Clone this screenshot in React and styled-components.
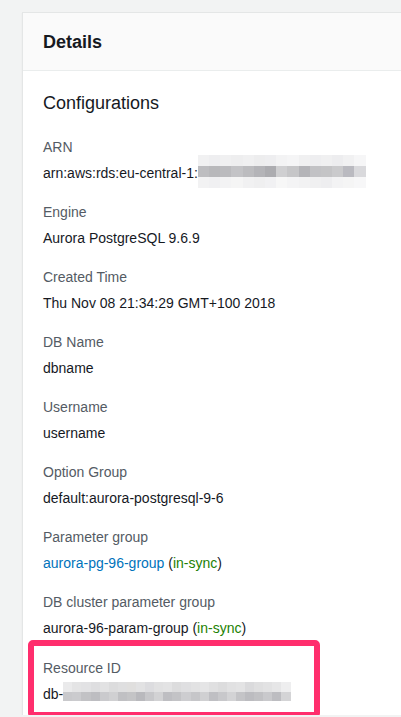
import styled, { createGlobalStyle } from "styled-components";

const GlobalStyle = createGlobalStyle`
  html, body {
    margin: 0;
    padding: 0;
    background: #f2f3f3;
    overflow: hidden;
  }

  body {
    font-family: "Liberation Sans", Arial, sans-serif;
    color: #16191f;
  }
`;

// pixelated blur used to hide account ids in the screenshot
const arnMosaic = [
  ["#f1f1f2", "#eeeef0", "#f0f0f1", "#eeeeef", "#f0f0f1", "#ededee", "#eeeef0", "#f3f3f4", "#f5f5f6", "#f0f0f1", "#eeeef0", "#f0f0f1", "#ededef", "#f1f1f2", "#f6f6f7"],
  ["#bdbdc0", "#b8b8bb", "#bbbbbe", "#c3c3c6", "#bcbcbf", "#b4b4b8", "#acacb0", "#cfcfd1", "#c6c6c8", "#b4b4b8", "#c2c2c5", "#c4c4c6", "#cacacc", "#babac0", "#d9d9dc"],
  ["#f2f2f3", "#f0f0f2", "#f3f3f4", "#f5f5f5", "#f1f1f2", "#efeff0", "#f1f1f3", "#f7f7f7", "#f4f4f5", "#f2f2f3", "#f0f0f1", "#eeeef0", "#f3f3f4", "#f5f5f5", "#f7f7f8"],
];

const resourceMosaic = [
  ["#eaeaeb", "#e4e4e5", "#e2e2e4", "#dedee0", "#e2e2e3", "#dcdcdd", "#dfdfe0", "#e0dfde", "#e2e2e3", "#dcdcdf", "#e1e1e2", "#e3e3e4", "#dcdcdd", "#dfdfe1", "#e2e2e3", "#e5e5e6", "#e0e0e1", "#dcdcdd", "#e1e1e2", "#e3e3e4", "#dadadc", "#dfdfe0", "#e2e2e3", "#e6e6e7", "#eeeeef"],
  ["#c9c9cc", "#cbcbce", "#c2c2c5", "#bdbdc1", "#cacacd", "#d0d0d2", "#c0c0c3", "#c4c4c6", "#b9b9bd", "#c7c7ca", "#d2d2d4", "#bebec2", "#c3c3c6", "#cdcdd0", "#c6c6c9", "#d0d0d2", "#bfbfc3", "#c8c8cb", "#d3d3d5", "#c4c4c7", "#bcbcc0", "#c1c1c4", "#c9c9cc", "#bdbdc1", "#d4d4d6"],
];

const fields = [
  { label: "ARN", value: "arn:aws:rds:eu-central-1:", mosaic: "arn" },
  { label: "Engine", value: "Aurora PostgreSQL 9.6.9" },
  { label: "Created Time", value: "Thu Nov 08 21:34:29 GMT+100 2018" },
  { label: "DB Name", value: "dbname" },
  { label: "Username", value: "username" },
  { label: "Option Group", value: "default:aurora-postgresql-9-6" },
  { label: "Parameter group", value: "aurora-pg-96-group", link: true, sync: "in-sync" },
  { label: "DB cluster parameter group", value: "aurora-96-param-group", sync: "in-sync" },
  { label: "Resource ID", value: "db-", mosaic: "resource", highlighted: true },
];

const App = () => {
  return (
    <>
      <GlobalStyle />
      <Card>
        <CardHeader>
          <Title>Details</Title>
        </CardHeader>
        <CardBody>
          <SectionTitle>Configurations</SectionTitle>
          <FieldList>
            {fields.map((f) => (
              <Field key={f.label} $highlighted={f.highlighted}>
                <Label>{f.label}</Label>
                <Value>
                  {f.link ? <Link>{f.value}</Link> : f.value}
                  {f.sync && (
                    <>
                      {" ("}
                      <Sync>{f.sync}</Sync>
                      {")"}
                    </>
                  )}
                  {f.mosaic === "arn" && <Mosaic rows={arnMosaic} cellW={11.2} cellH={11} up={8} />}
                  {f.mosaic === "resource" && <Mosaic rows={resourceMosaic} cellW={9.1} cellH={9.5} up={2} />}
                </Value>
              </Field>
            ))}
          </FieldList>
        </CardBody>
      </Card>
    </>
  );
};

export default App;

const Mosaic = ({ rows, cellW, cellH, up }) => {
  const height = rows.length * cellH;
  return (
    <MosaicGrid
      $cols={rows[0].length}
      $w={cellW}
      $h={cellH}
      $up={up}
      $down={height - 20 - up}
    >
      {rows.flat().map((c, i) => (
        <MosaicCell key={i} $shade={c} />
      ))}
    </MosaicGrid>
  );
};

const Card = styled.section`
  margin: 12px 0 0 22px;
  background: #fff;
  border: 1px solid #e4e6e6;
  border-right: none;
  border-bottom: none;
  box-shadow: 0 1px 1px rgba(0, 28, 36, 0.08);
`;

const CardHeader = styled.header`
  display: flex;
  align-items: center;
  height: 57px;
  padding: 0 20px;
  background: #fafafa;
  border-bottom: 1px solid #eaeded;
`;

const Title = styled.h2`
  margin: 0;
  font-size: 18px;
  font-weight: 700;
  line-height: 22px;
  color: #16191f;
`;

const CardBody = styled.div`
  padding: 20px 20px 0;
`;

const SectionTitle = styled.h3`
  margin: 0 0 22px;
  font-size: 18px;
  font-weight: 400;
  line-height: 24px;
  color: #16191f;
`;

const FieldList = styled.div`
  display: flex;
  flex-direction: column;
  gap: 19px;
`;

const Field = styled.div`
  display: flex;
  flex-direction: column;
  gap: 6px;

  ${({ $highlighted }) =>
    $highlighted &&
    `
    width: 292px;
    box-sizing: border-box;
    margin: -17px 0 -3px -15px;
    padding: 12px 9px 8px;
    border: 6px solid #ff2e6d;
    border-radius: 5px;
  `}
`;

const Label = styled.div`
  font-size: 14px;
  line-height: 20px;
  color: #545b64;
`;

const Value = styled.div`
  height: 20px;
  white-space: pre;
  font-size: 14px;
  line-height: 20px;
  color: #16191f;
`;

const Link = styled.span`
  color: #0073bb;
`;

const Sync = styled.span`
  color: #1d8102;
`;

const MosaicGrid = styled.span`
  display: inline-grid;
  vertical-align: top;
  grid-template-columns: repeat(${({ $cols }) => $cols}, ${({ $w }) => $w}px);
  grid-auto-rows: ${({ $h }) => $h}px;
  margin-top: -${({ $up }) => $up}px;
  margin-bottom: ${({ $down }) => -$down}px;
`;

const MosaicCell = styled.span`
  background: ${({ $shade }) => $shade};
`;
